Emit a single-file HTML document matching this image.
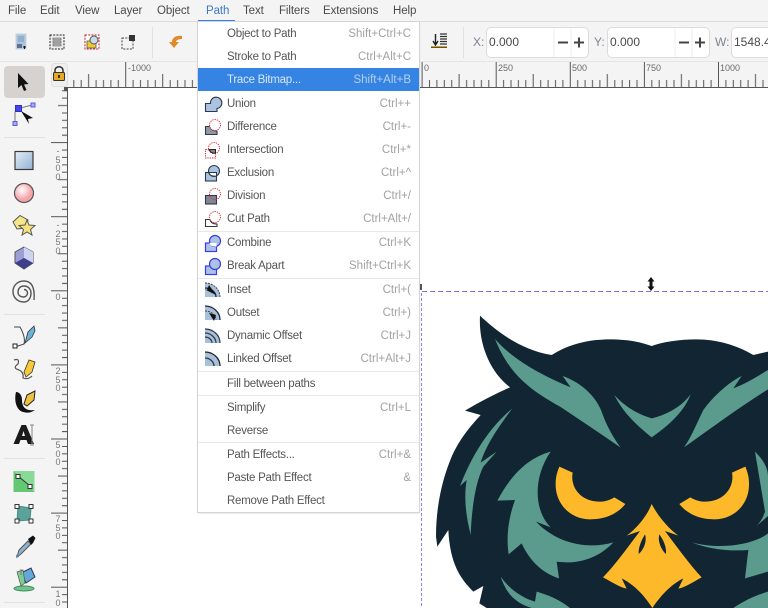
<!DOCTYPE html>
<html><head><meta charset="utf-8"><style>
html,body{margin:0;padding:0;width:768px;height:608px;overflow:hidden}
#p{position:relative;width:768px;height:608px;overflow:hidden;background:#f5f4f4;font-family:"Liberation Sans",sans-serif;font-size:11.5px;color:#555}
svg{position:absolute;left:0;top:0;display:block}
.m{position:absolute;top:4px;line-height:15px;color:#4a4a4a;letter-spacing:-.1px}
#menu{position:absolute;left:198px;top:22px;width:221px;height:490px;background:#fff;box-shadow:0 0 0 1px #d4d4d4,0 1px 2px rgba(0,0,0,.2)}
.r{position:absolute;left:0;width:221px;height:23px;line-height:25px}
.r b{position:absolute;left:29px;font-weight:normal;color:#555;white-space:nowrap;letter-spacing:-.25px}
.r i{position:absolute;right:8px;font-style:normal;color:#a2a2a2;white-space:nowrap}
.h{background:#3584e4}.h b{color:#d8e6f8}.h i{color:#b5d0f0}
.s{position:absolute;left:0;width:221px;height:1px;background:#e8e8e8}
.in{position:absolute;top:27px;height:29px;background:#fff;border:1px solid #dedcda;border-radius:5px;line-height:29px;padding-left:2px;box-sizing:content-box;color:#4a4a4a;font-size:12px}
.l{position:absolute;top:35px;color:#7c8490;font-size:12px}
.t{position:absolute;font-size:9px;color:#6a6a6a;line-height:10px}
.v{position:absolute;left:54px;font-size:9px;color:#777;line-height:8.5px;width:8px;text-align:center}
</style></head><body><div id="p">

<div class="m" style="left:8px">File</div>
<div class="m" style="left:40px">Edit</div>
<div class="m" style="left:75px">View</div>
<div class="m" style="left:114px">Layer</div>
<div class="m" style="left:157px">Object</div>
<div class="m" style="left:206px;color:#3a78c8">Path</div>
<div class="m" style="left:243px">Text</div>
<div class="m" style="left:279px">Filters</div>
<div class="m" style="left:323px">Extensions</div>
<div class="m" style="left:393px">Help</div>

<div class="l" style="left:473px">X:</div>
<div class="in" style="left:486px;width:99px">0.000</div>
<div class="l" style="left:594px">Y:</div>
<div class="in" style="left:607px;width:99px">0.000</div>
<div class="l" style="left:715px">W:</div>
<div class="in" style="left:731px;width:60px;border-right:0">1548.48</div>

<svg width="768" height="608" viewBox="0 0 768 608">
<defs>
<pattern id="hr" patternUnits="userSpaceOnUse" x="125.2" y="62" width="74.1" height="26">
<path stroke="#555" stroke-width="1" fill="none" d="M.5 0V25M7.9 18V25M15.3 18V25M22.7 18V25M30.1 18V25M37.5 12V25M45 18V25M52.4 18V25M59.8 18V25M67.2 18V25"/>
</pattern>
<pattern id="vr" patternUnits="userSpaceOnUse" x="51" y="68" width="16" height="74.1">
<path stroke="#555" stroke-width="1" fill="none" d="M0 0H16M11 7.4H16M11 14.8H16M11 22.2H16M11 29.6H16M7 37H16M11 44.5H16M11 51.9H16M11 59.3H16M11 66.7H16" transform="translate(0 .5)"/>
</pattern>
<linearGradient id="gr" x1="0" y1="0" x2="1" y2="1"><stop offset="0" stop-color="#e6edf5"/><stop offset="1" stop-color="#90b2d5"/></linearGradient>
<radialGradient id="gc" cx=".4" cy=".35"><stop offset="0" stop-color="#fff"/><stop offset="1" stop-color="#f3a2a8"/></radialGradient>
</defs>
<rect x="0" y="21" width="768" height="1" fill="#dcdbda"/>
<rect x="198" y="20" width="37" height="2" fill="#3584e4"/>
<rect x="0" y="61" width="768" height="1" fill="#e6e5e4"/>
<rect x="152" y="27" width="1" height="31" fill="#e2e1e0"/>
<rect x="463" y="27" width="1" height="31" fill="#e2e1e0"/>
<rect x="68" y="88" width="700" height="520" fill="#fff"/>
<rect x="68" y="62" width="700" height="25" fill="url(#hr)"/>
<rect x="67" y="87" width="701" height="1" fill="#555"/>
<rect x="51" y="88" width="16" height="520" fill="url(#vr)"/>
<rect x="67" y="88" width="1" height="520" fill="#555"/>
<rect x="64" y="87" width="4" height="4" fill="#555"/>

<g stroke="#444" stroke-width="2" fill="none">
<path d="M558 42.5H568M574 42.5H584M579 37.5V47.5M679 42.5H689M695 42.5H705M700 37.5V47.5"/>
</g>
<path d="M554 28V57M571 28V57M675 28V57M692 28V57" stroke="#eeeeee" fill="none"/>

<g>
<rect x="16" y="34" width="10" height="15" fill="#a9c4de" stroke="#c8d4e0"/>
<path d="M18 37H24M18 39H24M18 41H24" stroke="#7d9cbc"/>
<rect x="17" y="44" width="5" height="4" fill="#60708a"/>
<path d="M23 47H26M24.5 46V49" stroke="#111" stroke-width="1"/>
<rect x="50" y="35" width="14" height="14" fill="#eee" stroke="#222" stroke-dasharray="2 1.2"/>
<path d="M53 38h8v2h-8zM53 41h8v2h-8zM53 44h8v2h-8z" fill="#bbb" stroke="#555" stroke-width=".6"/>
<rect x="85" y="35" width="14" height="14" fill="#fff" stroke="#c3202a" stroke-dasharray="2 1.2"/>
<rect x="87" y="41" width="9" height="7" fill="#f0c832" stroke="#555" stroke-width=".8"/>
<circle cx="94" cy="40" r="4" fill="#c9dcea" stroke="#555"/>
<rect x="122" y="38" width="11" height="11" fill="none" stroke="#444" stroke-dasharray="2 1.3"/>
<rect x="129" y="35" width="6" height="6" fill="#333"/>
<path d="M182 36C176 35 172 38 172 42H169L174 48L179 42H176C176 40 179 39 182 39Z" fill="#e08a2c"/>
<path d="M435.500 34V44M433 41L435.500 45L438 41" stroke="#222" stroke-width="1.4" fill="none"/>
<path d="M440 34H447M440 36.500H447M440 39H447M440 41.500H447M440 44H447" stroke="#333" stroke-width="1.2"/>
<rect x="431" y="46" width="16" height="2" fill="#c9a227"/>
<path d="M431 47.500H447" stroke="#333" stroke-width=".7"/>
</g>

<rect x="51.500" y="63.500" width="16" height="23" rx="3" fill="#f0efee" stroke="#e0dfdd"/>
<path d="M55 73V70.500C55 65.500 63 65.500 63 70.500V73" fill="none" stroke="#333" stroke-width="1.500"/>
<rect x="53.500" y="72.500" width="11" height="8" rx="1" fill="#e8a820" stroke="#333"/>
<rect x="58" y="75" width="2" height="3" fill="#333"/>

<rect x="4" y="66" width="41" height="32" rx="4" fill="#d5d2cf"/>
<path d="M18 73L18 88L21.500 85L24 91L26.500 90L24 84.500L28.500 84Z" fill="#111"/>
<path d="M15 122V112Q17 108 33 105" fill="none" stroke="#777"/>
<rect x="15.500" y="105.500" width="6" height="6" fill="#4646e8" stroke="#3030c0"/>
<rect x="31" y="103" width="4" height="4" fill="#a9a9f5" stroke="#5a5ae0"/>
<rect x="13" y="121.500" width="4" height="4" fill="#a9a9f5" stroke="#5a5ae0"/>
<path d="M21 111L33 118L28 119L29 124Z" fill="#111"/>
<path d="M4 137.500H45M4 314.500H45M4 458.500H45M4 602.500H45" stroke="#e2e1e0"/>
<rect x="15" y="151.500" width="18" height="18" fill="url(#gr)" stroke="#3a3a3a" stroke-width="1.200"/>
<circle cx="24" cy="193" r="9.500" fill="url(#gc)" stroke="#555" stroke-width="1.200"/>
<path d="M20 215.500L28 220L26 228L17 229L13 222Z" fill="#f6e68a" stroke="#555"/>
<path d="M27 220L29 225L35 225.500L30.500 229.500L32 235L27 232L22 235L23.500 229.500L19 225.500L25 225Z" fill="#f6e27a" stroke="#555"/>
<path d="M24 247L33 252V263L24 269L15 263V252Z" fill="#9c9fd6" stroke="#555"/>
<path d="M24 247L33 252V263L24 258Z" fill="#cfd2f2"/>
<path d="M15 263L24 258L33 263L24 269Z" fill="#3d3f8a"/>
<path d="M34 300C35 288 32 281 24 281C17 281 13 286 13 291.500C13 298 18 302 24 302C29 302 31 297 31 293C31 289 28 286 24 286C20 286 18 289 18 292C18 295 20 297 23.500 297C26 297 27.500 295 27.500 293C27.500 291 26 289.500 24 289.500" fill="none" stroke="#555" stroke-width="1.400"/>
<path d="M14 327H20C24 334 25 340 24 344L18 346H15" fill="none" stroke="#444"/>
<rect x="13" y="344" width="4" height="4" fill="#fff" stroke="#222"/>
<path d="M25 343L28 332L34 326L35 331L32 337Z" fill="#6fb1d8" stroke="#333" stroke-width=".8"/>
<path d="M14 360Q20 358 18 364Q12 368 19 370Q24 372 23 378Q28 380 32 376" fill="none" stroke="#555" stroke-width="1.200"/>
<path d="M24 372L29 360L35 362L32 372L26 377Z" fill="#f6c93a" stroke="#333" stroke-width=".8"/>
<path d="M16 392C14 400 16 410 23 412C30 414 33 411 35 410C28 411 22 409 22 400C22 396 20 392 16 392Z" fill="#111"/>
<path d="M24 404L27 395L35 391L34 400L27 406Z" fill="#f0c040" stroke="#222"/>
<path d="M13.500 444L21.500 425H26L34 444H28L26.500 440H20.500L19 444ZM22 436H25L23.500 431Z" fill="#1a1a1a"/>
<path d="M30 425H34M32 425V445M30 445H34" stroke="#888" fill="none"/>
<rect x="13.500" y="471" width="21" height="21" fill="#62c874"/>
<path d="M13.500 471H34.500V492Z" fill="#9adfa6" opacity=".7"/>
<path d="M18 476L30 486" stroke="#333"/>
<rect x="16" y="474.500" width="4" height="4" fill="#fff" stroke="#333"/>
<rect x="28" y="484.500" width="4" height="4" fill="#fff" stroke="#333"/>
<path d="M18 506L31 508L30 520L17 521Z" fill="#5aa29a" stroke="#4a8e8a"/>
<g fill="#fff" stroke="#333"><rect x="15" y="504.500" width="4" height="4"/><rect x="29" y="504.500" width="4" height="4"/><rect x="15" y="519" width="4" height="4"/><rect x="29" y="519" width="4" height="4"/></g>
<path d="M17 557L19 550L28 541L31 544L21 554Z" fill="#8db2cf" stroke="#555"/>
<path d="M28 539L33 535.500L35.500 538L33 543L31 545Z" fill="#111"/>
<circle cx="17.500" cy="556" r="1.500" fill="#5a7fa0"/>
<ellipse cx="24" cy="588.500" rx="10" ry="2.500" fill="#6ec58a" stroke="#4a8a60"/>
<path d="M21 573L31 568L35 577L26 583Z" fill="#62a8d8" stroke="#335"/>
<path d="M17 572L23 570L25 583L21 586Z" fill="#7ccf90" stroke="#555" stroke-width=".7"/>
<path d="M21 569V575" stroke="#777"/>

<path d="M422 291.500H768" stroke="#7a70ea" stroke-dasharray="5 3" fill="none"/>
<path d="M421.500 293V608" stroke="#8a80f0" stroke-dasharray="3 2" fill="none"/>
<rect x="420" y="284" width="2" height="6" fill="#555"/>
<path d="M651 277L654.500 281.500H652.500V286.500H654.500L651 291L647.500 286.500H649.500V281.500H647.500Z" fill="#111"/>
</svg>

<div class="t" style="left:128px;top:63px">-1000</div>
<div class="t" style="left:424px;top:63px">0</div>
<div class="t" style="left:498px;top:63px">250</div>
<div class="t" style="left:572px;top:63px">500</div>
<div class="t" style="left:646px;top:63px">750</div>
<div class="t" style="left:720px;top:63px">1000</div>
<div class="v" style="top:147px">-<br>5<br>0<br>0</div>
<div class="v" style="top:221px">-<br>2<br>5<br>0</div>
<div class="v" style="top:293px">0</div>
<div class="v" style="top:367px">2<br>5<br>0</div>
<div class="v" style="top:441px">5<br>0<br>0</div>
<div class="v" style="top:515px">7<br>5<br>0</div>
<div class="v" style="top:590px">1<br>0</div>

<svg style="left:420px;top:270px" width="348" height="338" viewBox="0 0 1044 1014">
<path fill="#112533" d="M180 137C225 180 300 240 395 255C450 220 510 208 570 208C620 208 660 215 695 228C730 215 780 208 830 208C890 208 950 225 1000 255L1044 245V1014H200L178 1000L190 948L160 965C120 925 90 880 85 780L52 830L48 800C48 700 70 620 95 560C120 505 150 470 182 435L135 422C180 395 225 372 270 352C215 310 175 230 180 137Z"/>
<g fill="#5a9b8d">
<path d="M225 207C270 260 350 310 452 352L428 318C490 340 530 385 545 425C560 470 585 510 602 533C540 490 480 450 420 410C340 365 270 320 225 207Z"/>
<path d="M583 375C620 415 660 435 695 445C735 435 780 415 812 373C790 430 740 470 695 502C655 470 610 430 583 375Z"/>
<path d="M792 532C815 500 830 460 850 420C875 385 920 340 965 318L940 355C980 340 1010 320 1044 300V358C960 410 880 470 792 532Z"/>
<path d="M277 415C230 455 170 520 120 648L140 630C130 690 140 745 152 795C155 720 165 640 190 590L230 545L182 578C200 520 240 465 277 415Z"/>
<path d="M392 545C320 565 270 620 232 692L285 690C265 745 258 800 266 853L305 820C330 875 370 910 417 925L410 875C480 885 540 860 580 817C500 840 410 820 348 755L392 772C340 720 340 620 392 545Z"/>
<path d="M1005 545C1025 565 1044 590 1044 620V738L1005 772C1020 760 1030 740 1035 725ZM815 817C860 835 920 845 985 840L975 925L1044 905V790C1000 825 900 840 815 817Z"/>
<path d="M242 920C260 975 290 1000 335 1014H450C420 990 385 975 350 965L345 995C310 985 270 960 242 920Z"/>
<path d="M940 1014C975 990 1010 975 1044 965V1014Z"/>
</g>
<g fill="#fdb92a">
<path d="M418 590L458 608C450 650 480 695 540 695C555 695 570 690 583 682L616 702C590 735 550 748 510 748C450 748 405 700 407 640C407 620 412 605 418 590Z"/>
<path d="M976 590L936 608C944 650 914 695 854 695C839 695 824 690 811 682L778 702C804 735 844 748 884 748C944 748 989 700 987 640C987 620 982 605 976 590Z"/>
<path d="M695 702C715 740 745 775 775 797L735 783C770 830 810 885 845 922C820 935 800 950 775 956L790 925C750 945 720 980 697 1014C675 980 645 945 605 925L620 956C595 950 575 935 549 922C585 885 625 830 660 783L620 797C650 775 680 740 695 702Z"/>
</g>
<path fill="#112533" d="M675 793C665 810 655 830 656 852C670 840 682 815 675 793ZM718 793C712 815 725 840 738 852C740 830 730 810 718 793Z"/>
</svg>

<div id="menu">
<div class="r" style="top:0"><b>Object to Path</b><i>Shift+Ctrl+C</i></div>
<div class="r" style="top:23px"><b>Stroke to Path</b><i>Ctrl+Alt+C</i></div>
<div class="r h" style="top:46px"><b>Trace Bitmap...</b><i>Shift+Alt+B</i></div>
<div class="r" style="top:70px"><b>Union</b><i>Ctrl++</i></div>
<div class="r" style="top:93px"><b>Difference</b><i>Ctrl+-</i></div>
<div class="r" style="top:116px"><b>Intersection</b><i>Ctrl+*</i></div>
<div class="r" style="top:139px"><b>Exclusion</b><i>Ctrl+^</i></div>
<div class="r" style="top:162px"><b>Division</b><i>Ctrl+/</i></div>
<div class="r" style="top:185px"><b>Cut Path</b><i>Ctrl+Alt+/</i></div>
<div class="s" style="top:209px"></div>
<div class="r" style="top:209px"><b>Combine</b><i>Ctrl+K</i></div>
<div class="r" style="top:232px"><b>Break Apart</b><i>Shift+Ctrl+K</i></div>
<div class="s" style="top:256px"></div>
<div class="r" style="top:256px"><b>Inset</b><i>Ctrl+(</i></div>
<div class="r" style="top:279px"><b>Outset</b><i>Ctrl+)</i></div>
<div class="r" style="top:302px"><b>Dynamic Offset</b><i>Ctrl+J</i></div>
<div class="r" style="top:325px"><b>Linked Offset</b><i>Ctrl+Alt+J</i></div>
<div class="s" style="top:349px"></div>
<div class="r" style="top:350px"><b>Fill between paths</b></div>
<div class="s" style="top:373px"></div>
<div class="r" style="top:374px"><b>Simplify</b><i>Ctrl+L</i></div>
<div class="r" style="top:397px"><b>Reverse</b></div>
<div class="s" style="top:420px"></div>
<div class="r" style="top:421px"><b>Path Effects...</b><i>Ctrl+&amp;</i></div>
<div class="r" style="top:444px"><b>Paste Path Effect</b><i>&amp;</i></div>
<div class="r" style="top:467px"><b>Remove Path Effect</b></div>

<svg style="left:0;top:0" width="30" height="490" viewBox="198 22 30 490">
<path d="M205.500 111.500V103.500H210.500A5.700 5.700 0 1 1 217 108.500V111.500Z" fill="#a9c3e0" stroke="#2f3a48" stroke-width="1.100"/>
<path d="M205.500 134.500V126.500H210C210.500 129 212.500 131 217 131V134.500Z" fill="#8f98a5" stroke="#2f3a48" stroke-width="1.100"/>
<circle cx="215" cy="125" r="5.500" fill="#fff" stroke="#d8323c" stroke-dasharray="1.300 1"/>
<rect x="205.500" y="149.500" width="10" height="8.500" fill="none" stroke="#d8323c" stroke-dasharray="1.300 1"/>
<circle cx="214" cy="148" r="5.500" fill="none" stroke="#d8323c" stroke-dasharray="1.300 1"/>
<path d="M209.500 149.500H215.500V153C212 153.500 210 152 209.500 149.500Z" fill="#7f8896" stroke="#222"/>
<rect x="205.500" y="172.500" width="11" height="8.500" fill="#a9c3e0" stroke="#2f3a48" stroke-width="1.100"/>
<circle cx="214" cy="171" r="5.500" fill="#a9c3e0" stroke="#2f3a48" stroke-width="1.100"/>
<path d="M209 172.500H216.500V176C212 176.500 209.500 175 209 172.500Z" fill="#fff" stroke="#2f3a48"/>
<rect x="205.500" y="195.500" width="11" height="8.500" fill="#7d8796" stroke="#2f3a48" stroke-width="1.100"/>
<circle cx="215" cy="194" r="5.500" fill="none" stroke="#d8323c" stroke-dasharray="1.300 1"/>
<path d="M205.500 226.500V219.500H210C210.500 222 212.500 224 217 224V226.500Z" fill="#fff" stroke="#2f3a48" stroke-width="1.100"/>
<circle cx="215" cy="217" r="5.500" fill="#fff" stroke="#d8323c" stroke-dasharray="1.300 1"/>
<rect x="205.500" y="243" width="11" height="8.500" fill="#a9c3e0" stroke="#3a3af0" stroke-width="1.200"/>
<circle cx="215" cy="241" r="5.500" fill="#a9c3e0" stroke="#3a3af0" stroke-width="1.200"/>
<path d="M209.500 243H216.500V246.500C212.500 247 210 245.500 209.500 243Z" fill="#fff"/>
<rect x="205.500" y="266" width="11" height="8.500" fill="#a9c3e0" stroke="#3a3af0" stroke-width="1.200"/>
<circle cx="215" cy="264" r="5.500" fill="#a9c3e0" stroke="#3a3af0" stroke-width="1.200"/>
<g>
<path d="M205 283C213 283 220 289 220 297H205Z" fill="#a8c0da" stroke="none"/>
<path d="M205 283C213 283 220 289 220 297" fill="none" stroke="#3a4654" stroke-dasharray="2 1"/>
<path d="M205 288C211 288 216 292 216 297" fill="none" stroke="#1f2a36" stroke-width="1.300"/>
<path d="M217 297L210 287L208 292L205 291Z" fill="#111" transform="translate(-1 -2)"/>
</g>
<g>
<path d="M205 306C213 306 220 312 220 320H205Z" fill="#a8c0da"/>
<path d="M205 306C213 306 220 312 220 320" fill="none" stroke="#1f2a36" stroke-width="1.300"/>
<path d="M205 311C211 311 216 315 216 320" fill="none" stroke="#3a4654" stroke-dasharray="2 1"/>
<path d="M209 313L216 315L214 321Z" fill="#111"/>
</g>
<g fill="none">
<path d="M205 329C213 329 220 335 220 343H205Z" fill="#a8c0da"/>
<path d="M205 329C213 329 220 335 220 343M205 333C211 333 216 338 216 343M205 337C209 337 212 340 212 343" stroke="#2f3a48" stroke-width="1.200"/>
</g>
<g fill="none">
<path d="M205 352C213 352 220 358 220 366H205Z" fill="#a8c0da"/>
<path d="M205 352C213 352 220 358 220 366" stroke="#222" stroke-width="1.300"/>
<path d="M205 358C210 358 214 362 214 366" stroke="#2f3a48" stroke-width="1.300"/>
</g>
</svg>
</div>
</div></body></html>
